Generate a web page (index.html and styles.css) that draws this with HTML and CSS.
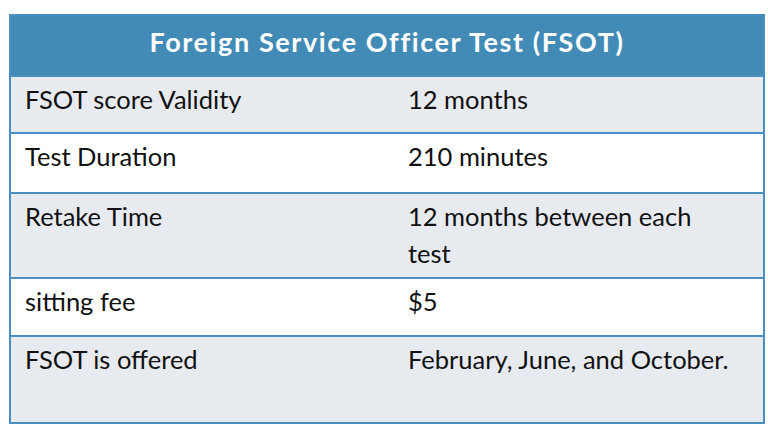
FILE: index.html
```html
<!DOCTYPE html>
<html>
<head>
<meta charset="utf-8">
<link rel="stylesheet" href="styles.css">
</head>
<body>
<table class="fsot">
  <colgroup>
    <col class="c1">
    <col class="c2">
  </colgroup>
  <thead>
    <tr><th colspan="2">Foreign Service Officer Test (FSOT)</th></tr>
  </thead>
  <tbody>
    <tr class="shade r1"><td>FSOT score Validity</td><td class="v">12 months</td></tr>
    <tr class="r2"><td>Test Duration</td><td class="v">210 minutes</td></tr>
    <tr class="shade r3"><td>Retake Time</td><td class="v">12 months between each test</td></tr>
    <tr class="r4"><td>sitting fee</td><td class="v">$5</td></tr>
    <tr class="shade r5"><td>FSOT is offered</td><td class="v">February, June, and October.</td></tr>
  </tbody>
</table>
</body>
</html>
```
FILE: styles.css
```css
html, body {
  margin: 0;
  padding: 0;
  background: #ffffff;
}
body {
  padding: 14px 4px 0 9px;
  font-family: Lato, "Open Sans", sans-serif;
}
.fsot {
  width: 754px;
  border-collapse: collapse;
  border: 2px solid #4a8fc0;
  table-layout: fixed;
}
.c1 { width: 384px; }
.c2 { width: 370px; }
.fsot th {
  background: #428bb6;
  color: #ffffff;
  font-weight: 700;
  font-size: 27px;
  letter-spacing: 1.6px;
  height: 50px;
  padding: 0 0 9px 0;
  text-align: center;
  vertical-align: middle;
  border-bottom: 2px solid #4a8fc0;
}
.fsot td {
  font-size: 25.5px;
  line-height: 37px;
  color: #111111;
  padding: 4px 17px 1px 14px;
  vertical-align: top;
  border-top: 2px solid #4a8fc0;
}
.fsot td.v {
  padding-right: 29px;
}
.fsot tr.shade td {
  background: #e7ebf0;
}
.r1 td { height: 50px; }
.r2 td { height: 53px; }
.r3 td { height: 78px; }
.r4 td { height: 51px; }
.r5 td { height: 80px; }
```
